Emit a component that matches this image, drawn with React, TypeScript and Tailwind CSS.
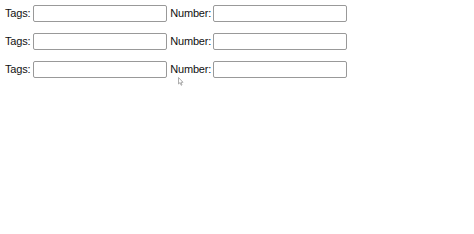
import React from "react";

const Row = () => (
  <div className="flex items-center h-[17px]">
    <span className="tracking-[-0.2px]">Tags:</span>
    <input type="text" className="ml-[3px] w-[134px] h-[17px] border border-[#999999] rounded-[2px] bg-white outline-none" />
    <span className="ml-[3px] tracking-[-0.2px]">Number:</span>
    <input type="text" className="ml-[2px] w-[134px] h-[17px] border border-[#999999] rounded-[2px] bg-white outline-none" />
  </div>
);

export default function App() {
  return (
    <div className="relative w-[474px] h-[234px] bg-white text-[11px] text-[#111]" style={{ fontFamily: '"Liberation Sans", Arial, sans-serif' }}>
      <div className="flex flex-col gap-[11px] pt-[5px] pl-[5px]">
        <Row />
        <Row />
        <Row />
      </div>
      <svg className="absolute left-[178px] top-[77px]" width="6" height="9" viewBox="0 0 6 9">
        <path d="M0.5 0.5 L0.5 7 L2 5.6 L3.2 8.3 L4 8 L3 5.3 L5 5.3 Z" fill="#fff" stroke="#9a9a9a" strokeWidth="0.8" />
      </svg>
    </div>
  );
}
